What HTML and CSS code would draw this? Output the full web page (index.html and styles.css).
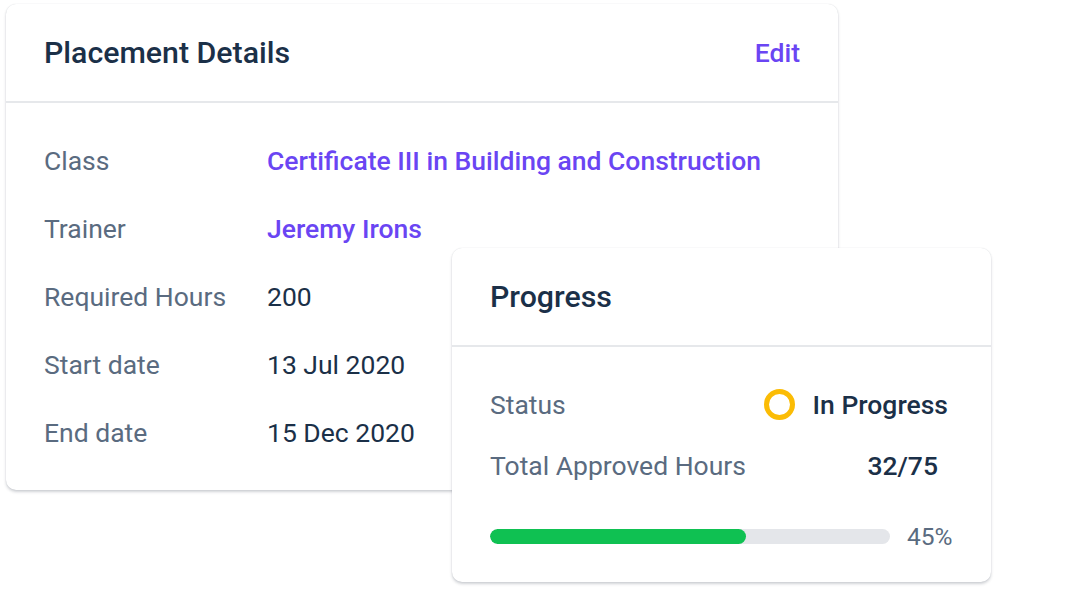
FILE: index.html
```html
<!DOCTYPE html>
<html>
<head>
<meta charset="utf-8">
<link rel="stylesheet" href="styles.css">
</head>
<body>
<div class="stage">
  <section class="card details">
    <header class="card-head">
      <h2 class="card-title">Placement Details</h2>
      <a class="edit">Edit</a>
    </header>
    <div class="card-body">
      <div class="row"><span class="label">Class</span><span class="value link">Certificate III in Building and Construction</span></div>
      <div class="row"><span class="label">Trainer</span><span class="value link">Jeremy Irons</span></div>
      <div class="row"><span class="label">Required Hours</span><span class="value">200</span></div>
      <div class="row"><span class="label">Start date</span><span class="value">13 Jul 2020</span></div>
      <div class="row"><span class="label">End date</span><span class="value">15 Dec 2020</span></div>
    </div>
  </section>

  <section class="card progress">
    <header class="card-head">
      <h2 class="card-title">Progress</h2>
    </header>
    <div class="card-body pbody">
      <div class="prow status-row">
        <span class="label">Status</span>
        <span class="status"><span class="ring"></span><span class="strong">In Progress</span></span>
      </div>
      <div class="prow hours-row">
        <span class="label">Total Approved Hours</span>
        <span class="strong">32/75</span>
      </div>
      <div class="bar-row">
        <div class="track"><div class="fill" style="width:64%"></div></div>
        <span class="pct">45%</span>
      </div>
    </div>
  </section>
</div>
</body>
</html>
```

FILE: styles.css
```css
* { box-sizing: border-box; }
html, body { margin: 0; padding: 0; background: #ffffff; }
body {
  font-family: Roboto, "Noto Sans", Arial, sans-serif;
  color: #1b3048;
  width: 1080px;
  height: 590px;
  overflow: hidden;
}
.stage {
  position: relative;
  width: 1080px;
  height: 590px;
  padding: 4px 0 0 6px;
}
.card {
  background: #fff;
  border-radius: 10px;
  box-shadow: 0 2px 3px rgba(40, 50, 70, 0.22), 0 0 1px rgba(40, 50, 70, 0.18);
}
.details {
  width: 832px;
  height: 486px;
}
.card-head {
  height: 99px;
  display: flex;
  align-items: center;
  justify-content: space-between;
  padding: 0 38px;
  border-bottom: 2px solid #e6e8eb;
}
.card-title {
  margin: 0;
  font-size: 30.3px;
  font-weight: 500;
  color: #1b3048;
}
.edit {
  font-size: 26.5px;
  font-weight: 500;
  color: #6a45f3;
}
.card-body {
  padding: 23px 38px 0 38px;
}
.row {
  display: flex;
  align-items: center;
  height: 68px;
  font-size: 26.5px;
}
.label {
  color: #5a6b80;
  font-size: 26.5px;
}
.row .label { width: 223px; flex: none; }
.value { color: #1b3048; }
.value.link { color: #6a45f3; font-weight: 500; }

.progress {
  position: absolute;
  left: 452px;
  top: 248px;
  width: 539px;
  height: 334px;
}
.pbody {
  padding: 21px 38px 0 38px;
}
.prow {
  display: flex;
  align-items: center;
  justify-content: space-between;
  font-size: 26.5px;
}
.status-row { height: 72px; padding-right: 5px; }
.hours-row { height: 50px; padding-right: 15px; }
.status {
  display: flex;
  align-items: center;
  gap: 18px;
}
.ring {
  width: 31px;
  height: 31px;
  border-radius: 50%;
  border: 5.5px solid #fbbc05;
}
.strong {
  font-weight: 500;
  color: #1b3048;
  font-size: 26.5px;
}
.bar-row {
  display: flex;
  align-items: center;
  height: 70px;
  padding-top: 23px;
  gap: 17px;
}
.track {
  width: 400px;
  height: 15px;
  background: #e4e6ea;
  border-radius: 8px;
  overflow: hidden;
}
.fill {
  height: 100%;
  background: #0fc152;
  border-radius: 8px;
}
.pct {
  font-size: 24.5px;
  color: #5a6b80;
}
```
